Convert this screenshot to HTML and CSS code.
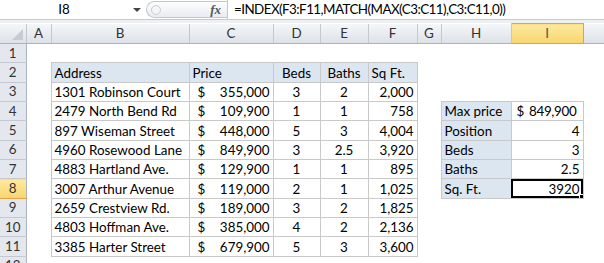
FILE: index.html
```html
<!DOCTYPE html>
<html lang="en">
<head>
    <meta charset="UTF-8">
    <title>INDEX MATCH example</title>
    <link rel="stylesheet" href="styles.css">
</head>
<body>
    <div class="formula-bar">
        <div class="name-box">I8</div>
        <div class="name-arrow"><span class="caret"></span></div>
        <div class="fx-box">
            <span class="grip"></span>
            <span class="fx">fx</span>
        </div>
        <div class="formula">=INDEX(F3:F11,MATCH(MAX(C3:C11),C3:C11,0))</div>
    </div>
    <div class="strip"></div>

    <table class="sheet">
        <colgroup>
            <col style="width:26px">
            <col style="width:25px">
            <col style="width:138px">
            <col style="width:84px">
            <col style="width:47px">
            <col style="width:48px">
            <col style="width:49px">
            <col style="width:24px">
            <col style="width:70px">
            <col style="width:72px">
            <col style="width:40px">
        </colgroup>
        <tr class="col-heads">
            <th class="corner"><span class="tri"></span></th>
            <th>A</th><th>B</th><th>C</th><th>D</th><th>E</th><th>F</th><th>G</th><th>H</th><th class="sel">I</th><th></th>
        </tr>
        <tr>
            <th class="rh">1</th><td></td><td></td><td></td><td></td><td></td><td></td><td></td><td></td><td></td><td></td>
        </tr>
        <tr>
            <th class="rh">2</th><td></td>
            <td class="b hd">Address</td><td class="b hd">Price</td><td class="b hd ctr">Beds</td><td class="b hd ctr">Baths</td><td class="b hd">Sq Ft.</td>
            <td></td><td></td><td></td><td></td>
        </tr>
        <tr>
            <th class="rh">3</th><td></td>
            <td class="b">1301 Robinson Court</td><td class="b money"><span>$</span>355,000</td><td class="b ctr">3</td><td class="b ctr">2</td><td class="b num">2,000</td>
            <td></td><td></td><td></td><td></td>
        </tr>
        <tr>
            <th class="rh">4</th><td></td>
            <td class="b">2479 North Bend Rd</td><td class="b money"><span>$</span>109,900</td><td class="b ctr">1</td><td class="b ctr">1</td><td class="b num">758</td>
            <td></td><td class="b hd">Max price</td><td class="b money tight"><span>$</span>849,900</td><td></td>
        </tr>
        <tr>
            <th class="rh">5</th><td></td>
            <td class="b">897 Wiseman Street</td><td class="b money"><span>$</span>448,000</td><td class="b ctr">5</td><td class="b ctr">3</td><td class="b num">4,004</td>
            <td></td><td class="b hd">Position</td><td class="b num">4</td><td></td>
        </tr>
        <tr>
            <th class="rh">6</th><td></td>
            <td class="b">4960 Rosewood Lane</td><td class="b money"><span>$</span>849,900</td><td class="b ctr">3</td><td class="b ctr">2.5</td><td class="b num">3,920</td>
            <td></td><td class="b hd">Beds</td><td class="b num">3</td><td></td>
        </tr>
        <tr>
            <th class="rh">7</th><td></td>
            <td class="b">4883 Hartland Ave.</td><td class="b money"><span>$</span>129,900</td><td class="b ctr">1</td><td class="b ctr">1</td><td class="b num">895</td>
            <td></td><td class="b hd">Baths</td><td class="b num">2.5</td><td></td>
        </tr>
        <tr>
            <th class="rh sel">8</th><td></td>
            <td class="b">3007 Arthur Avenue</td><td class="b money"><span>$</span>119,000</td><td class="b ctr">2</td><td class="b ctr">1</td><td class="b num">1,025</td>
            <td></td><td class="b hd">Sq. Ft.</td><td class="b num active">3920<span class="handle"></span></td><td></td>
        </tr>
        <tr>
            <th class="rh">9</th><td></td>
            <td class="b">2659 Crestview Rd.</td><td class="b money"><span>$</span>189,000</td><td class="b ctr">3</td><td class="b ctr">2</td><td class="b num">1,825</td>
            <td></td><td></td><td></td><td></td>
        </tr>
        <tr>
            <th class="rh">10</th><td></td>
            <td class="b">4803 Hoffman Ave.</td><td class="b money"><span>$</span>385,000</td><td class="b ctr">4</td><td class="b ctr">2</td><td class="b num">2,136</td>
            <td></td><td></td><td></td><td></td>
        </tr>
        <tr>
            <th class="rh">11</th><td></td>
            <td class="b">3385 Harter Street</td><td class="b money"><span>$</span>679,900</td><td class="b ctr">5</td><td class="b ctr">3</td><td class="b num">3,600</td>
            <td></td><td></td><td></td><td></td>
        </tr>
        <tr>
            <th class="rh">12</th><td></td><td></td><td></td><td></td><td></td><td></td><td></td><td></td><td></td><td></td>
        </tr>
    </table>
</body>
</html>
```

FILE: styles.css
```css
body {
    margin: 0;
    background: #fff;
    font-family: Lato, "Open Sans", sans-serif;
    color: #000;
    overflow: hidden;
    width: 604px;
    height: 263px;
}

/* formula bar */
.formula-bar {
    display: flex;
    height: 19px;
    border-bottom: 1px solid #c5cbd3;
    font-size: 13.4px;
    line-height: 19px;
}
.name-box {
    width: 128px;
    text-align: center;
}
.name-arrow {
    width: 18px;
    display: flex;
    align-items: center;
    justify-content: center;
}
.caret {
    width: 0;
    height: 0;
    border-left: 4px solid transparent;
    border-right: 4px solid transparent;
    border-top: 4px solid #444;
}
.fx-box {
    width: 81px;
    height: 17px;
    margin-top: 1px;
    border: 1px solid #c2c7cf;
    border-right: none;
    border-radius: 10px 0 0 10px;
    background: linear-gradient(#fdfdfe, #e9ecf0);
    display: flex;
    align-items: center;
    justify-content: space-between;
    box-sizing: border-box;
    padding: 0 6px 0 4px;
}
.grip {
    width: 8px;
    height: 8px;
    border-radius: 50%;
    border: 1px solid #c9ced5;
    background: #f3f5f7;
}
.fx {
    font-family: "Liberation Serif", serif;
    font-style: italic;
    font-weight: bold;
    font-size: 13px;
    color: #555;
}
.formula {
    flex: 1;
    border-left: 1px solid #c2c7cf;
    padding-left: 6px;
    letter-spacing: -0.55px;
}
.strip {
    height: 3px;
    background: #eef1f4;
}

/* sheet grid */
.sheet {
    border-collapse: collapse;
    table-layout: fixed;
    width: 621px;
    font-size: 13.4px;
}
.sheet tr {
    height: 19.33px;
}
.sheet tr.col-heads {
    height: 20px;
}
.sheet td, .sheet th {
    padding: 0 3px;
    white-space: nowrap;
    overflow: hidden;
    vertical-align: bottom;
    line-height: 17px;
    font-weight: normal;
    box-sizing: border-box;
}
.col-heads th {
    background: linear-gradient(#f4f6f8, #dde2e8);
    border-right: 1px solid #c4c9d0;
    border-bottom: 1px solid #a9b3c0;
    color: #333;
    text-align: center;
    vertical-align: middle;
}
.col-heads th.sel {
    background: linear-gradient(#fde99f, #f9d56d);
    border: 1px solid #e3a247;
    color: #555;
}
.corner {
    position: relative;
}
.tri {
    position: absolute;
    right: 3px;
    bottom: 3px;
    width: 0;
    height: 0;
    border-left: 11px solid transparent;
    border-bottom: 11px solid #c8ccd2;
}
.rh {
    background: #e4e8ee;
    border-right: 1px solid #a9b3c0;
    border-bottom: 1px solid #c4c9d0;
    color: #333;
    text-align: center;
    vertical-align: middle !important;
}
.rh.sel {
    background: linear-gradient(#fde99f, #f9d56d);
    border-bottom: 1px solid #e3a247;
}

/* data cells */
.b {
    border: 1px solid #c9c9c9;
}
.hd {
    background: #dce6f1;
}
.ctr {
    text-align: center;
}
.num {
    text-align: right;
}
.money {
    text-align: right;
    padding-right: 9px;
}
.money span {
    float: left;
    padding-left: 5px;
}
.money.tight {
    padding-right: 6px;
    letter-spacing: -0.3px;
}
.money.tight span {
    padding-left: 2px;
}
.active {
    position: relative;
    outline: 2px solid #000;
    outline-offset: -2px;
}
.handle {
    position: absolute;
    right: -3px;
    bottom: -3px;
    width: 5px;
    height: 5px;
    background: #000;
    border: 1px solid #fff;
}
```
